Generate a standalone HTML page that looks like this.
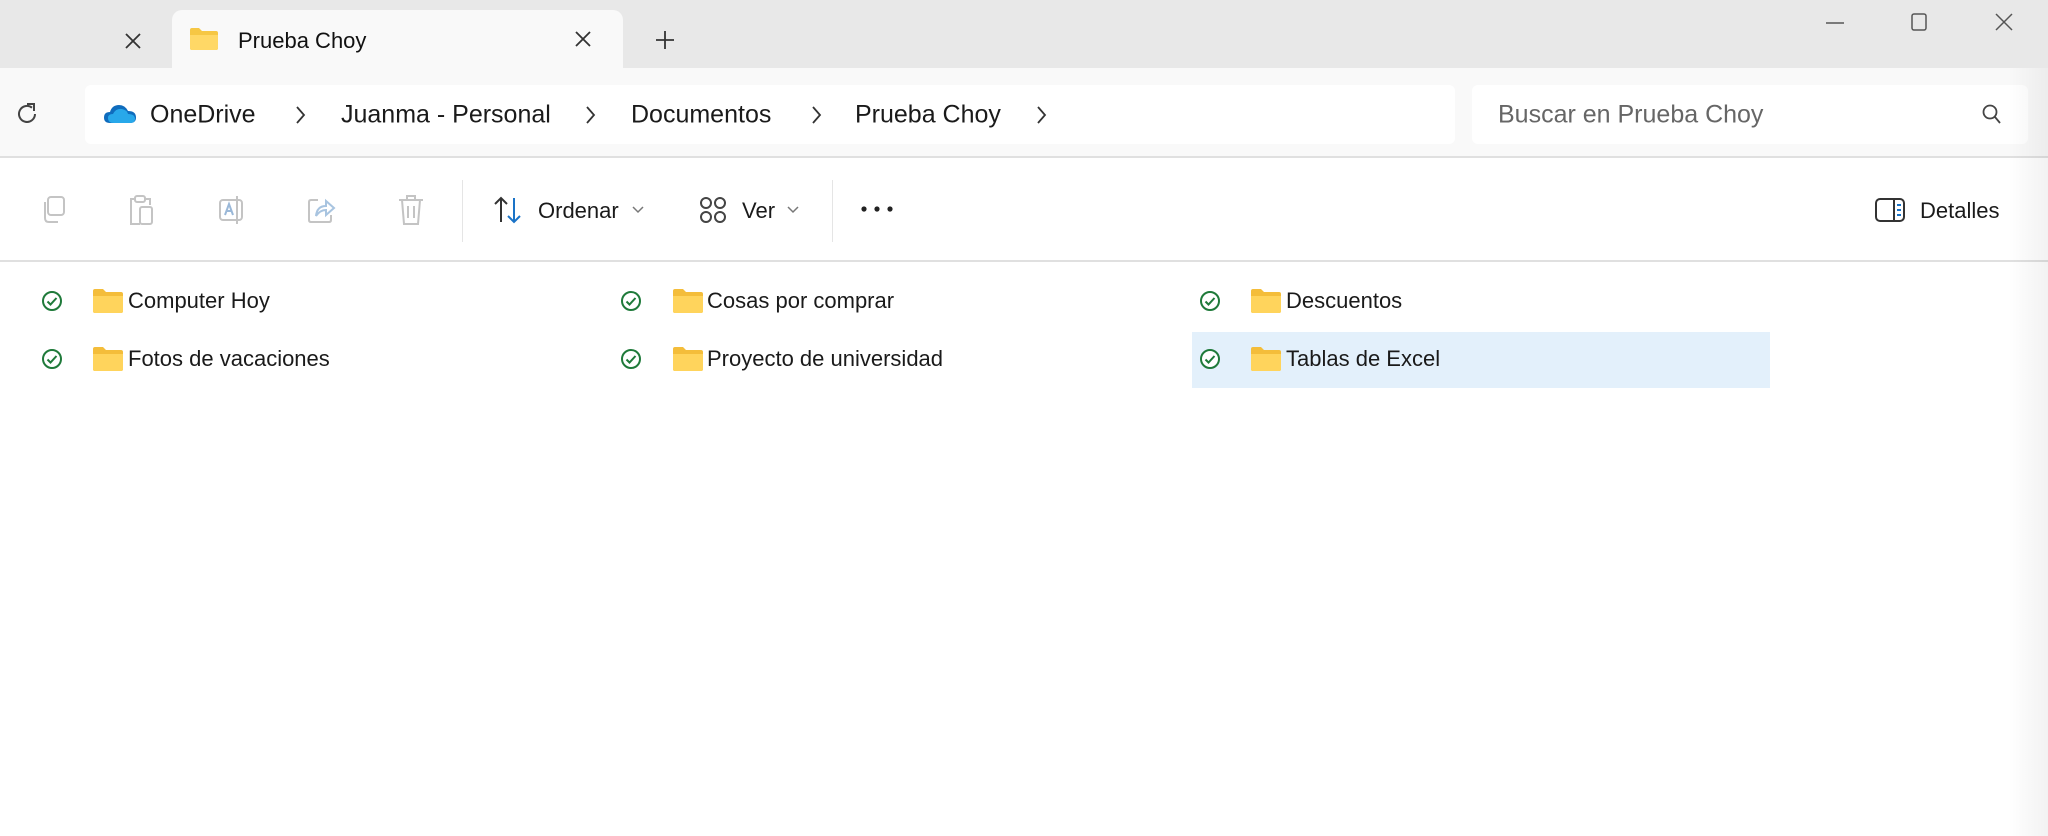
<!DOCTYPE html>
<html><head><meta charset="utf-8"><style>
*{margin:0;padding:0;box-sizing:border-box}
body{width:2048px;height:836px;overflow:hidden;background:#fff;font-family:"Liberation Sans",sans-serif;color:#1a1a1a;position:relative}
.a{position:absolute}
.t{position:absolute;white-space:nowrap;transform:translateY(-50%)}
svg{position:absolute;overflow:visible}
</style></head><body>
<div class="a" style="left:0;top:0;width:2048px;height:68px;background:#e8e8e8"></div>
<div class="a" style="left:172px;top:10px;width:451px;height:60px;background:#f9f9f9;border-radius:10px 10px 0 0"></div>
<div class="a" style="left:0;top:68px;width:2048px;height:90px;background:#f9f9f9;border-bottom:2px solid #e0e0e0"></div>
<svg style="left:125px;top:33px" width="16" height="16"><path d="M1 1L15 15M15 1L1 15" stroke="#333" stroke-width="1.8"/></svg>
<svg style="left:189px;top:27px" width="30" height="24"><path d="M1 3Q1 1 3 1H10L13 4H27Q29 4 29 6V21Q29 23 27 23H3Q1 23 1 21Z" fill="#f6c744"/><path d="M1 8H29V21Q29 23 27 23H3Q1 23 1 21Z" fill="#ffd866"/></svg>
<div class="t" style="left:238px;top:41px;font-size:22px;color:#111">Prueba Choy</div>
<svg style="left:575px;top:31px" width="16" height="16"><path d="M1 1L15 15M15 1L1 15" stroke="#333" stroke-width="1.8"/></svg>
<svg style="left:656px;top:31px" width="18" height="18"><path d="M9 0V18M0 9H18" stroke="#333" stroke-width="1.8"/></svg>
<svg style="left:1826px;top:22px" width="18" height="2"><path d="M0 1H18" stroke="#555" stroke-width="1.5"/></svg>
<svg style="left:1911px;top:13px" width="16" height="18"><rect x="1" y="1" width="14" height="16" rx="2" fill="none" stroke="#555" stroke-width="1.5"/></svg>
<svg style="left:1995px;top:13px" width="18" height="18"><path d="M1 1L17 17M17 1L1 17" stroke="#555" stroke-width="1.5"/></svg>
<svg style="left:15px;top:102px" width="24" height="24"><path d="M20 12A8 8 0 1 1 17 5.7" fill="none" stroke="#444" stroke-width="2"/><path d="M12 3H19V10" fill="none" stroke="#444" stroke-width="2" transform="translate(0,-1)"/></svg>
<div class="a" style="left:85px;top:85px;width:1370px;height:59px;background:#fff;border-radius:6px"></div>
<svg style="left:104px;top:102px" width="32" height="22"><path d="M6 21Q0 21 0 15.5Q0 10 6 10Q8 3 15 3Q21 3 24 9Q32 9 32 15.5Q32 21 26 21Z" fill="#0f6cbd"/><path d="M10 21Q4 21 4 16Q4 12 9 12Q12 6 18 7Q23 8 24 12Q31 12 31 17Q31 21 26 21Z" fill="#28a8ea"/></svg>
<div class="t" style="left:150px;top:115px;font-size:25px">OneDrive</div>
<div class="t" style="left:341px;top:115px;font-size:25px">Juanma - Personal</div>
<div class="t" style="left:631px;top:115px;font-size:25px">Documentos</div>
<div class="t" style="left:855px;top:115px;font-size:25px">Prueba Choy</div>
<svg style="left:296px;top:106px" width="10" height="18"><path d="M1 1L8 9L1 17" fill="none" stroke="#333" stroke-width="1.8"/></svg>
<svg style="left:586px;top:106px" width="10" height="18"><path d="M1 1L8 9L1 17" fill="none" stroke="#333" stroke-width="1.8"/></svg>
<svg style="left:812px;top:106px" width="10" height="18"><path d="M1 1L8 9L1 17" fill="none" stroke="#333" stroke-width="1.8"/></svg>
<svg style="left:1037px;top:106px" width="10" height="18"><path d="M1 1L8 9L1 17" fill="none" stroke="#333" stroke-width="1.8"/></svg>
<div class="a" style="left:1472px;top:85px;width:556px;height:59px;background:#fff;border-radius:6px"></div>
<div class="t" style="left:1498px;top:115px;font-size:25px;color:#666">Buscar en Prueba Choy</div>
<svg style="left:1982px;top:104px" width="20" height="22"><circle cx="8" cy="8" r="6.5" fill="none" stroke="#444" stroke-width="1.8"/><path d="M13 13L18 19" stroke="#444" stroke-width="1.8"/></svg>
<svg style="left:40px;top:196px" width="26" height="28"><rect x="8" y="1" width="16" height="18" rx="3" fill="none" stroke="#c4c4c4" stroke-width="2"/><path d="M5 6V22Q5 26 9 26H18" fill="none" stroke="#c4c4c4" stroke-width="2"/></svg>
<svg style="left:128px;top:194px" width="26" height="32"><path d="M6 5H3V30H12" fill="none" stroke="#c4c4c4" stroke-width="2"/><rect x="7" y="2" width="10" height="6" rx="2" fill="none" stroke="#c4c4c4" stroke-width="2"/><rect x="12" y="13" width="12" height="17" rx="2" fill="none" stroke="#c4c4c4" stroke-width="2"/><path d="M18 5H22V11" fill="none" stroke="#c4c4c4" stroke-width="2"/></svg>
<svg style="left:216px;top:195px" width="30" height="30"><rect x="4" y="5" width="22" height="20" rx="3" fill="none" stroke="#c4c4c4" stroke-width="2"/><path d="M9 20L13 9L17 20M10.5 16H15.5" fill="none" stroke="#9ab8d8" stroke-width="2"/><path d="M21 1V29" stroke="#c4c4c4" stroke-width="2"/></svg>
<svg style="left:306px;top:195px" width="30" height="30"><path d="M12 5H5Q3 5 3 7V25Q3 27 5 27H23Q25 27 25 25V20" fill="none" stroke="#c4c4c4" stroke-width="2"/><path d="M10 21Q11 11 20 11V6L28 13L20 20V15Q14 15 10 21Z" fill="none" stroke="#a8c4e0" stroke-width="2"/></svg>
<svg style="left:398px;top:194px" width="26" height="32"><path d="M1 6H25M9 6V2H17V6M4 6L6 30H20L22 6M10 12V24M16 12V24" fill="none" stroke="#c4c4c4" stroke-width="2"/></svg>
<div class="a" style="left:462px;top:180px;width:1px;height:62px;background:#e5e5e5"></div>
<svg style="left:493px;top:196px" width="30" height="28"><path d="M8 26V2M2 8L8 2L14 8" fill="none" stroke="#333" stroke-width="2"/><path d="M21 2V26M15 20L21 26L27 20" fill="none" stroke="#1a73c7" stroke-width="2"/></svg>
<div class="t" style="left:538px;top:211px;font-size:22px">Ordenar</div>
<svg style="left:632px;top:206px" width="12" height="8"><path d="M1 1L6 6L11 1" fill="none" stroke="#777" stroke-width="1.5"/></svg>
<svg style="left:699px;top:196px" width="28" height="28"><circle cx="7" cy="7" r="5" fill="none" stroke="#444" stroke-width="2"/><circle cx="21" cy="7" r="5" fill="none" stroke="#444" stroke-width="2"/><circle cx="7" cy="21" r="5" fill="none" stroke="#444" stroke-width="2"/><circle cx="21" cy="21" r="5" fill="none" stroke="#444" stroke-width="2"/></svg>
<div class="t" style="left:742px;top:211px;font-size:22px">Ver</div>
<svg style="left:787px;top:206px" width="12" height="8"><path d="M1 1L6 6L11 1" fill="none" stroke="#777" stroke-width="1.5"/></svg>
<div class="a" style="left:832px;top:180px;width:1px;height:62px;background:#e5e5e5"></div>
<svg style="left:861px;top:206px" width="32" height="6"><circle cx="3" cy="3" r="2.6" fill="#222"/><circle cx="16" cy="3" r="2.6" fill="#222"/><circle cx="29" cy="3" r="2.6" fill="#222"/></svg>
<svg style="left:1875px;top:198px" width="30" height="24"><rect x="1" y="1" width="28" height="22" rx="4" fill="none" stroke="#333" stroke-width="2"/><path d="M19 1V23" stroke="#333" stroke-width="2"/><path d="M22 7H26M22 12H26M22 17H26" stroke="#1a73c7" stroke-width="2"/></svg>
<div class="t" style="left:1920px;top:211px;font-size:22px">Detalles</div>
<div class="a" style="left:0;top:260px;width:2048px;height:2px;background:#e0e0e0"></div>
<div class="a" style="left:1192px;top:332px;width:578px;height:56px;background:#e3f0fb"></div>
<svg style="left:0;top:0" width="2048" height="836">
<defs><g id="ck"><circle cx="0" cy="0" r="9" fill="#fff" stroke="#1f7a3a" stroke-width="2"/><path d="M-4.5 0.5L-1.5 3.5L4.5 -3" fill="none" stroke="#1f7a3a" stroke-width="2"/></g>
<g id="fd"><path d="M0 2Q0 0 2 0H10L13 3H28Q30 3 30 5V22Q30 24 28 24H2Q0 24 0 22Z" fill="#f4bd3a"/><path d="M0 7H30V22Q30 24 28 24H2Q0 24 0 22Z" fill="#ffd45c"/></g></defs>
<use href="#ck" x="52" y="301"/><use href="#fd" x="93" y="289"/>
<use href="#ck" x="631" y="301"/><use href="#fd" x="673" y="289"/>
<use href="#ck" x="1210" y="301"/><use href="#fd" x="1251" y="289"/>
<use href="#ck" x="52" y="359"/><use href="#fd" x="93" y="347"/>
<use href="#ck" x="631" y="359"/><use href="#fd" x="673" y="347"/>
<use href="#ck" x="1210" y="359"/><use href="#fd" x="1251" y="347"/>
</svg>
<div class="t" style="left:128px;top:301px;font-size:22px">Computer Hoy</div>
<div class="t" style="left:707px;top:301px;font-size:22px">Cosas por comprar</div>
<div class="t" style="left:1286px;top:301px;font-size:22px">Descuentos</div>
<div class="t" style="left:128px;top:359px;font-size:22px">Fotos de vacaciones</div>
<div class="t" style="left:707px;top:359px;font-size:22px">Proyecto de universidad</div>
<div class="t" style="left:1286px;top:359px;font-size:22px">Tablas de Excel</div>
<div class="a" style="left:2008px;top:68px;width:40px;height:768px;background:linear-gradient(90deg,rgba(0,0,0,0),rgba(0,0,0,0.05))"></div>
</body></html>
